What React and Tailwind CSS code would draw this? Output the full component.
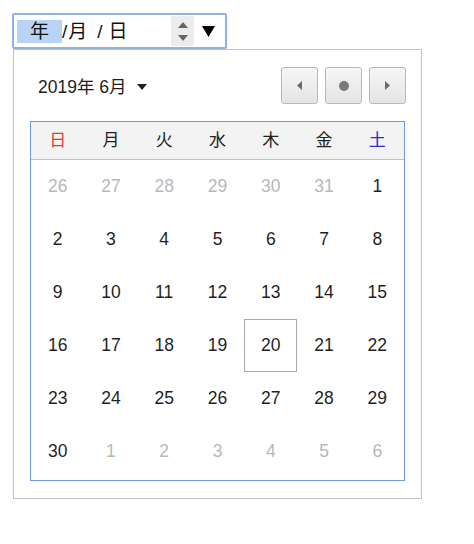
import React from "react";

const weekdays = [
  { label: "日", cls: "text-[#e03a3a]" },
  { label: "月", cls: "text-[#222]" },
  { label: "火", cls: "text-[#222]" },
  { label: "水", cls: "text-[#222]" },
  { label: "木", cls: "text-[#222]" },
  { label: "金", cls: "text-[#222]" },
  { label: "土", cls: "text-[#2a2ad8]" },
];

// June 2019 grid, with the trailing days of May and leading days of July
const days = [
  [26, false], [27, false], [28, false], [29, false], [30, false], [31, false], [1, true],
  [2, true], [3, true], [4, true], [5, true], [6, true], [7, true], [8, true],
  [9, true], [10, true], [11, true], [12, true], [13, true], [14, true], [15, true],
  [16, true], [17, true], [18, true], [19, true], [20, true], [21, true], [22, true],
  [23, true], [24, true], [25, true], [26, true], [27, true], [28, true], [29, true],
  [30, true], [1, false], [2, false], [3, false], [4, false], [5, false], [6, false],
];

const font = { fontFamily: '"Liberation Sans", Arial, "Noto Sans CJK JP", sans-serif' };

function NavButton({ children }) {
  return (
    <button className="flex h-[37px] w-[37px] items-center justify-center rounded-[3px] border border-[#b9b9b9] bg-gradient-to-b from-[#f6f6f6] to-[#e4e4e4]">
      {children}
    </button>
  );
}

export default function App() {
  return (
    <div className="min-h-[544px] bg-white pl-[12px] pt-[13px]" style={font}>
      {/* date input */}
      <div className="flex h-[36px] w-[215px] items-center rounded-[2px] border-2 border-[#8fb1e6] bg-white pl-[3px] text-[19px] leading-none text-[#111]">
        <span className="flex h-[23px] w-[45px] items-center justify-center bg-[#b8d3f6]">年</span>
        <span>/</span>
        <span className="ml-[1px]">月</span>
        <span className="ml-[10px]">/</span>
        <span className="ml-[6px]">日</span>
        <div className="ml-auto flex h-[30px] w-[23px] flex-col items-center justify-center gap-[7px] bg-[#ececec]">
          <svg width="10" height="6" viewBox="0 0 10 6"><polygon points="0,6 5,0 10,6" fill="#666" /></svg>
          <svg width="10" height="6" viewBox="0 0 10 6"><polygon points="0,0 10,0 5,6" fill="#666" /></svg>
        </div>
        <div className="ml-[8px] mr-[10px] flex items-center">
          <svg width="13" height="11" viewBox="0 0 13 11"><polygon points="0,0 13,0 6.5,11" fill="#000" /></svg>
        </div>
      </div>

      {/* calendar popup */}
      <div className="ml-[1px] w-[409px] border border-[#c2c2c2] bg-white px-[16px] pt-[17px] pb-[17px]">
        <div className="flex items-center">
          <div className="ml-[8px] mt-[3px] flex items-center text-[17.5px] text-[#1d1d1d]">
            <span>2019年 6月</span>
            <svg className="ml-[10px]" width="10" height="6" viewBox="0 0 10 6"><polygon points="0,0 10,0 5,6" fill="#222" /></svg>
          </div>
          <div className="ml-auto mr-[-1px] flex gap-[7px]">
            <NavButton>
              <svg width="5" height="9" viewBox="0 0 5 9"><polygon points="5,0 5,9 0,4.5" fill="#6a6a6a" /></svg>
            </NavButton>
            <NavButton>
              <span className="block h-[10px] w-[10px] rounded-full bg-[#7a7a7a]" />
            </NavButton>
            <NavButton>
              <svg width="5" height="9" viewBox="0 0 5 9"><polygon points="0,0 5,4.5 0,9" fill="#6a6a6a" /></svg>
            </NavButton>
          </div>
        </div>

        <div className="mt-[17px] w-[375px] border border-[#6f97e2]">
          <div className="grid h-[38px] grid-cols-7 items-center border-b border-[#c4c4c4] bg-[#f3f3f3] text-[17px]">
            {weekdays.map((w) => (
              <div key={w.label} className={`text-center ${w.cls}`}>{w.label}</div>
            ))}
          </div>
          <div className="grid grid-cols-7 pb-[2px] text-[17.5px]">
            {days.map(([d, cur], i) => (
              <div
                key={i}
                className={`flex h-[53px] items-center justify-center ${cur ? "text-[#1f1f1f]" : "text-[#b8b8b8]"} ${d === 20 && cur ? "border border-[#a8a8a8]" : ""}`}
              >
                {d}
              </div>
            ))}
          </div>
        </div>
      </div>
    </div>
  );
}
